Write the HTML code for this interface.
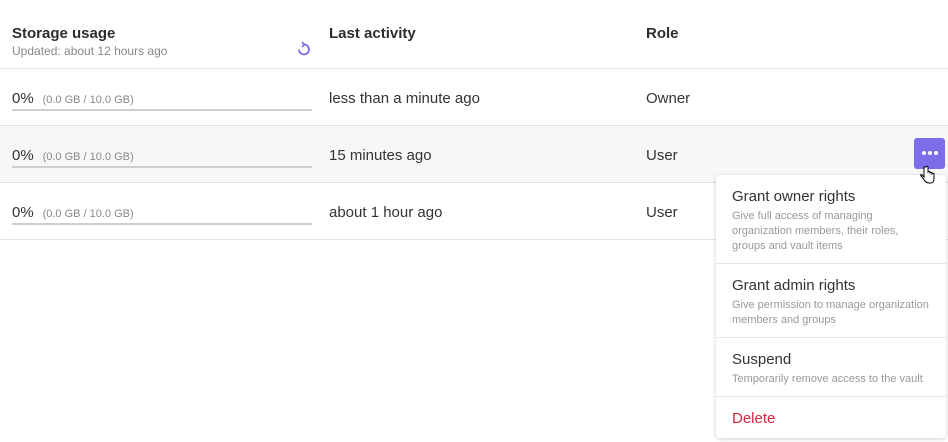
<!DOCTYPE html>
<html><head><style>
*{margin:0;padding:0;box-sizing:border-box}
body{width:948px;height:442px;background:#fff;font-family:"Liberation Sans",sans-serif;color:#333;position:relative;overflow:hidden}
.a{position:absolute;white-space:nowrap}
.h{font-size:15px;font-weight:bold;color:#2d2d2d}
.line{position:absolute;left:0;width:948px;height:1px;background:#e2e2e2}
.t{font-size:15px;color:#333}
.pct{font-size:15px;color:#333}
.gb{font-size:11px;color:#888}
.bar{position:absolute;left:12px;width:300px;height:2px;background:#cfcfcf}
.menu{position:absolute;left:716px;top:175px;width:230px;height:263px;background:#fff;border-radius:4px;box-shadow:0 1px 4px rgba(0,0,0,.2)}
.mt{position:absolute;left:16px;font-size:15px;color:#333;white-space:nowrap}
.ms{position:absolute;left:16px;font-size:11px;color:#999;line-height:15px}
.md{position:absolute;left:0;width:230px;height:1px;background:#e4e4e4}
</style></head><body>
<div class="a h" style="left:12px;top:25px">Storage usage</div>
<div class="a" style="left:12px;top:44px;font-size:12px;color:#888">Updated: about 12 hours ago</div>
<svg class="a" style="left:296px;top:41px" width="16" height="17" viewBox="0 0 16 17"><path d="M3 8.5A5 5 0 1 0 8 3.5" fill="none" stroke="#7b6ee8" stroke-width="1.8"/><path d="M6 1L8.5 3.5L6 6" fill="none" stroke="#7b6ee8" stroke-width="1.8"/></svg>
<div class="a h" style="left:329px;top:25px">Last activity</div>
<div class="a h" style="left:646px;top:25px">Role</div>
<div class="line" style="top:68px"></div>
<div style="position:absolute;left:0;top:126px;width:948px;height:56px;background:#f7f7f7"></div>
<div class="line" style="top:125px"></div>
<div class="line" style="top:182px"></div>
<div class="line" style="top:239px"></div>

<div class="a" style="left:12px;top:90px"><span class="pct">0%</span>&nbsp;&nbsp;<span class="gb">(0.0 GB / 10.0 GB)</span></div>
<div class="bar" style="top:109px"></div>
<div class="a t" style="left:329px;top:90px">less than a minute ago</div>
<div class="a t" style="left:646px;top:90px">Owner</div>

<div class="a" style="left:12px;top:147px"><span class="pct">0%</span>&nbsp;&nbsp;<span class="gb">(0.0 GB / 10.0 GB)</span></div>
<div class="bar" style="top:166px"></div>
<div class="a t" style="left:329px;top:147px">15 minutes ago</div>
<div class="a t" style="left:646px;top:147px">User</div>

<div class="a" style="left:12px;top:204px"><span class="pct">0%</span>&nbsp;&nbsp;<span class="gb">(0.0 GB / 10.0 GB)</span></div>
<div class="bar" style="top:223px"></div>
<div class="a t" style="left:329px;top:204px">about 1 hour ago</div>
<div class="a t" style="left:646px;top:204px">User</div>

<div style="position:absolute;left:914px;top:138px;width:31px;height:31px;background:#7b6ee8;border-radius:3px"></div>
<div class="a" style="left:922px;top:151px;width:4px;height:4px;background:#fff;border-radius:50%"></div>
<div class="a" style="left:928px;top:151px;width:4px;height:4px;background:#fff;border-radius:50%"></div>
<div class="a" style="left:934px;top:151px;width:4px;height:4px;background:#fff;border-radius:50%"></div>

<div class="menu">
<div class="mt" style="top:13px">Grant owner rights</div>
<div class="ms" style="top:34px">Give full access of managing<br>organization members, their roles,<br>groups and vault items</div>
<div class="md" style="top:88px"></div>
<div class="mt" style="top:102px">Grant admin rights</div>
<div class="ms" style="top:123px">Give permission to manage organization<br>members and groups</div>
<div class="md" style="top:162px"></div>
<div class="mt" style="top:176px">Suspend</div>
<div class="ms" style="top:197px">Temporarily remove access to the vault</div>
<div class="md" style="top:221px"></div>
<div class="mt" style="top:235px;color:#d0283f">Delete</div>
</div>
<svg class="a" style="left:920px;top:165px" width="16" height="20" viewBox="0 0 16 20"><path d="M4 2v10l-2-2c-1-1-2 0-1 1l4 5c1 1 2 2 4 2h2c2 0 3-2 3-4V9c0-1-1-1-2 0V8c0-1-1-1-2 0V7c0-1-1-1-2 0V2c0-1-2-1-2 0z" fill="#fff" stroke="#000" stroke-width="1"/></svg>
</body></html>
